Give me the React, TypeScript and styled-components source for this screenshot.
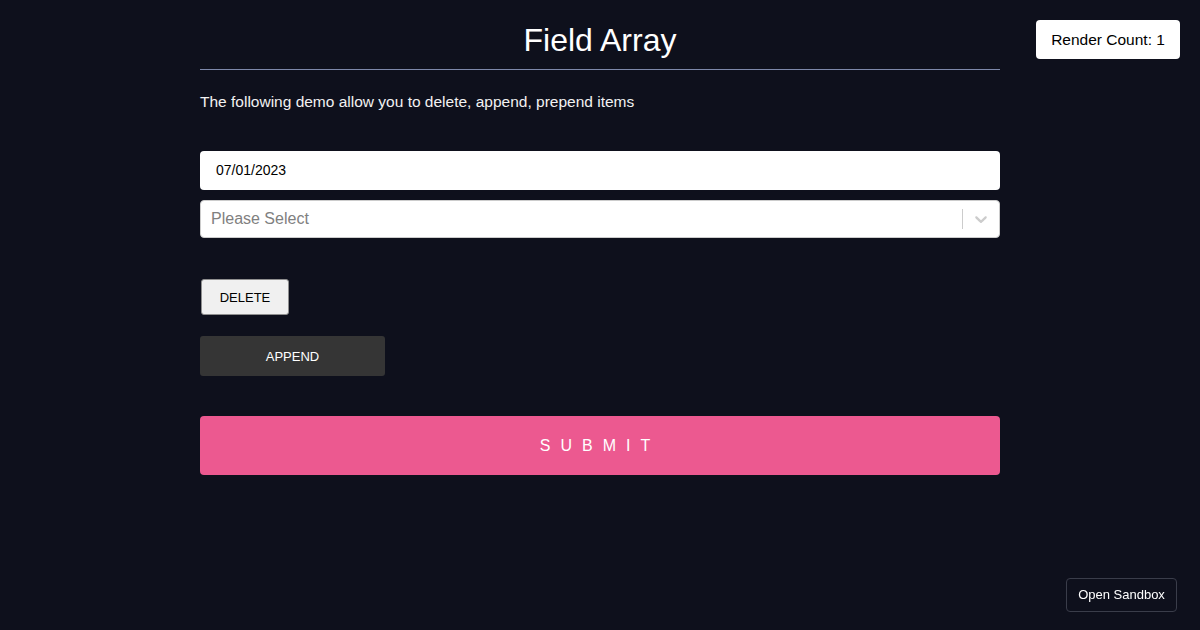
import React from 'react';
import styled, { createGlobalStyle } from 'styled-components';

const GlobalStyle = createGlobalStyle`
    html, body {
        margin: 0;
        padding: 0;
        background: #0e101c;
        color: #ffffff;
        font-family: "Liberation Sans", Arial, sans-serif;
    }
    * {
        box-sizing: border-box;
    }
`

const Page = styled.div`
    min-height: 630px;
    padding-top: 22px;
`

const Form = styled.form`
    width: 800px;
    margin: 0 auto;
    display: flex;
    flex-direction: column;
`

const Title = styled.h1`
    margin: 0;
    font-size: 32px;
    font-weight: 400;
    line-height: 37px;
    text-align: center;
    padding-bottom: 10px;
    border-bottom: 1px solid #7d88aa;
`

const Intro = styled.p`
    margin: 22px 0 39px;
    font-size: 15.5px;
    line-height: 20px;
    color: #f2f2f2;
`

const DateInput = styled.input`
    display: block;
    width: 100%;
    height: 39px;
    padding: 0 16px 1px;
    border: none;
    border-radius: 4px;
    background: #ffffff;
    color: #000000;
    font-family: "Liberation Sans", Arial, sans-serif;
    font-size: 14px;
    outline: none;
`

const SelectBox = styled.div`
    margin-top: 10px;
    height: 38px;
    display: flex;
    align-items: center;
    background: #ffffff;
    border: 1px solid #cccccc;
    border-radius: 4px;
`

const Placeholder = styled.span`
    flex: 1;
    padding-left: 10px;
    font-size: 16px;
    color: #808080;
`

const Separator = styled.span`
    align-self: stretch;
    width: 1px;
    margin: 8px 0;
    background: #cccccc;
`

const Chevron = styled.span`
    display: flex;
    padding: 8px;
    color: #cccccc;
`

const Actions = styled.div`
    margin-top: 41px;
    display: flex;
    flex-direction: column;
    align-items: flex-start;
    gap: 21px;
`

const Button = styled.button<{ $dark?: boolean; $width: number; $height: number }>`
    width: ${props => props.$width}px;
    height: ${props => props.$height}px;
    margin-left: ${props => (props.$dark ? 0 : 1)}px;
    border: ${props => (props.$dark ? 'none' : '1px solid #8f8f8f')};
    border-radius: 3px;
    background: ${props => (props.$dark ? '#353535' : '#f0f0f0')};
    color: ${props => (props.$dark ? '#ffffff' : '#000000')};
    font-family: "Liberation Sans", Arial, sans-serif;
    font-size: 13px;
    text-transform: uppercase;
    cursor: pointer;
`

const Submit = styled.button`
    margin-top: 40px;
    height: 59px;
    border: none;
    border-radius: 4px;
    background: #ec5990;
    color: #ffffff;
    font-family: "Liberation Sans", Arial, sans-serif;
    font-size: 16px;
    letter-spacing: 10px;
    text-transform: uppercase;
`

const RenderCount = styled.div`
    position: absolute;
    top: 20px;
    right: 20px;
    width: 144px;
    height: 39px;
    display: flex;
    align-items: center;
    justify-content: center;
    background: #ffffff;
    color: #000000;
    border-radius: 4px;
    font-size: 15.5px;
`

const Sandbox = styled.a`
    position: fixed;
    right: 23px;
    bottom: 18px;
    width: 111px;
    height: 34px;
    display: flex;
    align-items: center;
    justify-content: center;
    padding-bottom: 1px;
    border: 1px solid #3a3d4a;
    border-radius: 4px;
    color: #ffffff;
    font-size: 13px;
    text-decoration: none;
`

export default function App() {
    return (
        <Page>
            <GlobalStyle />
            <RenderCount>Render Count: 1</RenderCount>
            <Form onSubmit={e => e.preventDefault()}>
                <Title>Field Array</Title>
                <Intro>The following demo allow you to delete, append, prepend items</Intro>
                <DateInput type="text" defaultValue="07/01/2023" />
                <SelectBox>
                    <Placeholder>Please Select</Placeholder>
                    <Separator />
                    <Chevron>
                        <svg width="20" height="20" viewBox="0 0 20 20" fill="currentColor">
                            <path d="M4.516 7.548c0.436-0.446 1.043-0.481 1.576 0l3.908 3.747 3.908-3.747c0.533-0.481 1.141-0.446 1.574 0 0.436 0.445 0.408 1.197 0 1.615-0.406 0.418-4.695 4.502-4.695 4.502-0.217 0.223-0.502 0.335-0.787 0.335s-0.57-0.112-0.789-0.335c0 0-4.287-4.084-4.695-4.502s-0.436-1.17 0-1.615z" />
                        </svg>
                    </Chevron>
                </SelectBox>
                <Actions>
                    <Button type="button" $width={88} $height={36}>Delete</Button>
                    <Button type="button" $dark $width={185} $height={40}>Append</Button>
                </Actions>
                <Submit type="submit">Submit</Submit>
            </Form>
            <Sandbox href="#">Open Sandbox</Sandbox>
        </Page>
    );
}
